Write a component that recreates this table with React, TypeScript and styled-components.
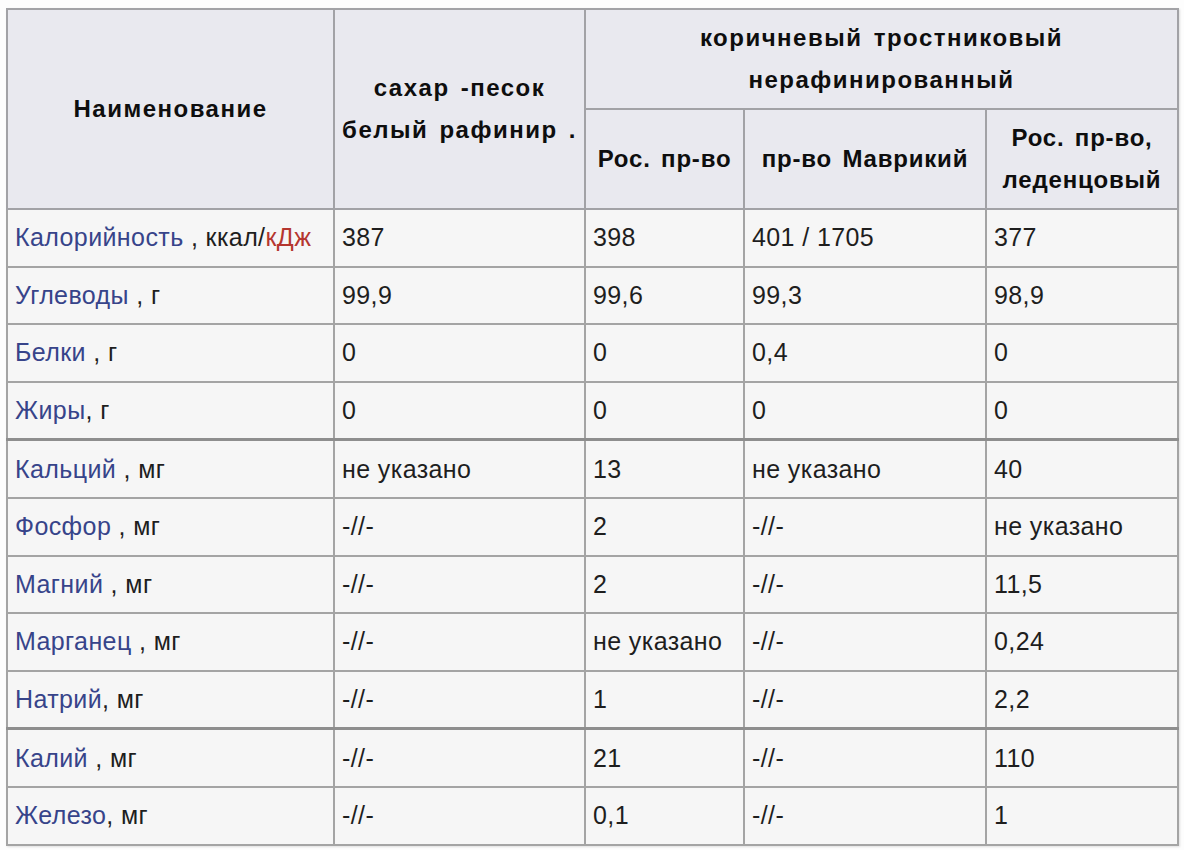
import React from "react"
import styled, { createGlobalStyle } from "styled-components"

type Row = {
  name: string
  unit: string
  extra?: string
  values: string[]
  thick?: boolean
}

const rows: Row[] = [
  { name: "Калорийность", unit: " , ккал/", extra: "кДж", values: ["387", "398", "401 / 1705", "377"] },
  { name: "Углеводы", unit: " , г", values: ["99,9", "99,6", "99,3", "98,9"] },
  { name: "Белки", unit: " , г", values: ["0", "0", "0,4", "0"] },
  { name: "Жиры", unit: ", г", values: ["0", "0", "0", "0"] },
  { name: "Кальций", unit: " , мг", values: ["не указано", "13", "не указано", "40"], thick: true },
  { name: "Фосфор", unit: " , мг", values: ["-//-", "2", "-//-", "не указано"] },
  { name: "Магний", unit: " , мг", values: ["-//-", "2", "-//-", "11,5"] },
  { name: "Марганец", unit: " , мг", values: ["-//-", "не указано", "-//-", "0,24"] },
  { name: "Натрий", unit: ", мг", values: ["-//-", "1", "-//-", "2,2"] },
  { name: "Калий", unit: " , мг", values: ["-//-", "21", "-//-", "110"], thick: true },
  { name: "Железо", unit: ", мг", values: ["-//-", "0,1", "-//-", "1"] },
]

const widths = [327, 251, 159, 242, 192]

export default function App() {
  return (
    <>
      <GlobalStyle />
      <S.Page>
        <S.Table>
          <colgroup>
            {widths.map((w, i) => (
              <col key={i} style={{ width: w }} />
            ))}
          </colgroup>
          <thead>
            <tr>
              <S.Th rowSpan={2}>Наименование</S.Th>
              <S.Th rowSpan={2}>
                сахар -песок
                <br />
                белый рафинир .
              </S.Th>
              <S.Th colSpan={3} $tall>
                коричневый тростниковый
                <br />
                нерафинированный
              </S.Th>
            </tr>
            <tr>
              <S.Th $tall $tight>Рос. пр-во</S.Th>
              <S.Th $tall $tight>пр-во Маврикий</S.Th>
              <S.Th $tall $tight>
                Рос. пр-во,
                <br />
                леденцовый
              </S.Th>
            </tr>
          </thead>
          <tbody>
            {rows.map((r) => (
              <S.Tr key={r.name} $thick={r.thick}>
                <S.Td>
                  <S.Link>{r.name}</S.Link>
                  {r.unit}
                  {r.extra && <S.RedLink>{r.extra}</S.RedLink>}
                </S.Td>
                {r.values.map((v, i) => (
                  <S.Td key={i}>{v}</S.Td>
                ))}
              </S.Tr>
            ))}
          </tbody>
        </S.Table>
      </S.Page>
    </>
  )
}

const GlobalStyle = createGlobalStyle`
  body {
    margin: 0;
    background: #fdfdfd;
    font-family: "Liberation Sans", Arial, sans-serif;
  }
`

const S = {
  Page: styled.div`
    padding: 8px 0 0 6px;
    width: 1184px;
    height: 850px;
    box-sizing: border-box;
  `,
  Table: styled.table`
    border-collapse: collapse;
    table-layout: fixed;
    width: 1171px;
    border: 2px solid #9c9c9c;
    box-shadow: 1px 1px 2px rgba(0, 0, 0, 0.12);
  `,
  Th: styled.th<{ $tall?: boolean; $tight?: boolean }>`
    background: #e9e9ef;
    border: 2px solid #a2a2a6;
    color: #0e0e0e;
    font-weight: bold;
    font-size: 24px;
    letter-spacing: ${({ $tight }) => ($tight ? "0.8px" : "1.5px")};
    word-spacing: 3px;
    line-height: 42px;
    height: ${({ $tall }) => ($tall ? "98px" : "auto")};
    padding: 0 2px;
    text-align: center;
    vertical-align: middle;
    white-space: nowrap;
    overflow: hidden;
  `,
  Tr: styled.tr<{ $thick?: boolean }>`
    td {
      border-top: ${({ $thick }) => ($thick ? "3px solid #8e8e8e" : "2px solid #a4a4a4")};
    }
  `,
  Td: styled.td`
    background: #f6f6f6;
    border: 2px solid #a4a4a4;
    color: #1e1e1e;
    font-size: 25px;
    letter-spacing: 0.4px;
    height: 55.6px;
    padding: 0 7px;
    vertical-align: middle;
    white-space: nowrap;
    overflow: hidden;
  `,
  Link: styled.span`
    color: #37448a;
  `,
  RedLink: styled.span`
    color: #b5362f;
  `,
}
